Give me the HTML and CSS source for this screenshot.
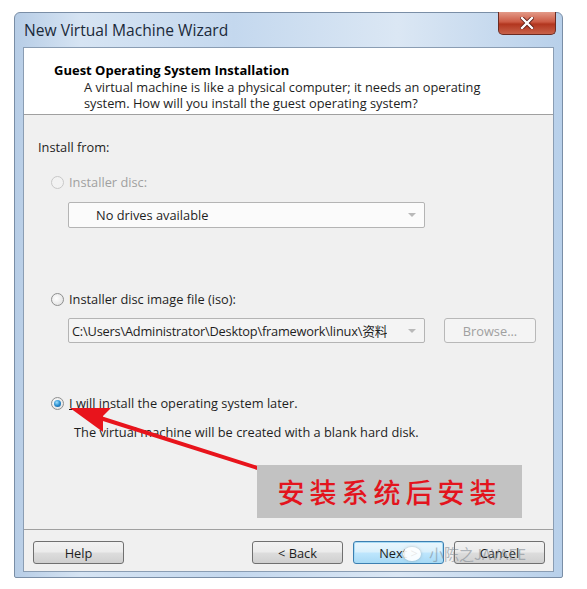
FILE: index.html
```html
<!DOCTYPE html>
<html lang="en">
<head>
    <meta charset="UTF-8">
    <title>New Virtual Machine Wizard</title>
    <link rel="stylesheet" href="styles.css">
</head>
<body>
    <div class="window">
        <div class="titlebar">
            <span class="title">New Virtual Machine Wizard</span>
            <button class="close" type="button">
                <svg width="14" height="12" viewBox="0 0 14 12">
                    <path d="M2 1 L12 11 M12 1 L2 11" stroke="#5a1a14" stroke-width="4" stroke-linecap="square"/>
                    <path d="M2 1 L12 11 M12 1 L2 11" stroke="#fff" stroke-width="2.4" stroke-linecap="square"/>
                </svg>
            </button>
        </div>

        <div class="client">
            <div class="header">
                <h1>Guest Operating System Installation</h1>
                <p>A virtual machine is like a physical computer; it needs an operating<br>system. How will you install the guest operating system?</p>
            </div>

            <div class="content">
                <div class="group-label">Install from:</div>

                <div class="option disabled"><span class="radio"></span>Installer disc:</div>
                <div class="combo drives disabled">
                    <span>No drives available</span>
                    <span class="arrow"></span>
                </div>

                <div class="option opt-iso"><span class="radio"></span>Installer disc image file (iso):</div>
                <div class="iso-row">
                    <div class="combo path disabled">
                        <span>C:\Users\Administrator\Desktop\framework\linux\资料</span>
                        <span class="arrow"></span>
                    </div>
                    <button class="btn browse" type="button" disabled>Browse...</button>
                </div>

                <div class="option opt-later"><span class="radio checked"></span><span><u>I</u> will install the operating system later.</span></div>
                <p class="note">The virtual machine will be created with a blank hard disk.</p>
            </div>

            <div class="footer">
                <button class="btn" type="button">Help</button>
                <div class="nav">
                    <button class="btn" type="button">&lt; Back</button>
                    <button class="btn default" type="button">Next &gt;</button>
                    <button class="btn" type="button">Cancel</button>
                </div>
            </div>
        </div>

        <!-- annotation drawn over the screenshot -->
        <svg class="arrow-note" width="549" height="566" viewBox="0 0 549 566">
            <line x1="253" y1="459" x2="80" y2="404" stroke="#e8141c" stroke-width="4" stroke-linecap="round"/>
            <path d="M56 396 L97 396 L89 404 L89 420 Z" fill="#e8141c"/>
        </svg>
        <div class="callout">安装系统后安装</div>
        <div class="watermark"><span class="wm-icon"></span>小陈之JAVAEE</div>
    </div>
</body>
</html>
```

FILE: styles.css
```css
* {
    box-sizing: border-box;
    margin: 0;
    padding: 0;
}

body {
    background: #fff;
    font-family: "Open Sans", "Noto Sans CJK SC", sans-serif;
    font-size: 12.8px;
    color: #1e1e1e;
}

.window {
    position: relative;
    width: 549px;
    height: 566px;
    margin: 12px 0 0 14px;
    padding: 0 8px 5px 8px;
    border: 1px solid #7a8ea6;
    border-radius: 6px 6px 2px 2px;
    background: linear-gradient(90deg, #b7cde6 0%, #d6e4f3 12%, #c4d8ee 40%, #dbe7f4 70%, #b8d0ea 100%);
    display: flex;
    flex-direction: column;
}

.titlebar {
    height: 34px;
    display: flex;
    align-items: flex-start;
    justify-content: space-between;
}

.title {
    font-size: 15.6px;
    color: #1b2a3a;
    margin: 6px 0 0 1px;
}

.close {
    width: 58px;
    height: 23px;
    margin: -1px -2px 0 0;
    border: 1px solid #6b2b22;
    border-top: none;
    border-radius: 0 0 5px 5px;
    background: linear-gradient(180deg, #e39a88 0%, #cc5a44 45%, #b2361f 55%, #c8624a 100%);
    display: flex;
    align-items: center;
    justify-content: center;
}

.client {
    flex: 1;
    display: flex;
    flex-direction: column;
    background: #f0f0f0;
    border: 1px solid #8a9db3;
}

.header {
    height: 67px;
    background: #fff;
    border-bottom: 1px solid #a0a0a0;
    padding: 15px 0 0 30px;
}

.header h1 {
    font-size: 13px;
    font-weight: 700;
    color: #000;
    line-height: 15px;
}

.header p {
    margin: 1px 0 0 30px;
    line-height: 16px;
    color: #1e1e1e;
}

.content {
    height: 414px;
    padding-left: 14px;
}

.group-label {
    margin-top: 24px;
    height: 16px;
    line-height: 16px;
}

.option {
    display: flex;
    align-items: center;
    gap: 5px;
    height: 16px;
    line-height: 16px;
    margin: 19px 0 0 13px;
}

.option.disabled {
    color: #a0a0a0;
}

.opt-iso {
    margin-top: 63px;
}

.opt-later {
    margin-top: 52px;
}

.radio {
    width: 13px;
    height: 13px;
    border-radius: 50%;
    border: 1px solid #8e8f8f;
    background: radial-gradient(circle at 40% 40%, #fff 0%, #e6e6e6 70%, #cfcfcf 100%);
    display: flex;
    align-items: center;
    justify-content: center;
}

.disabled .radio {
    border-color: #c8c8c8;
    background: #f2f2f2;
}

.radio.checked::after {
    content: "";
    width: 7px;
    height: 7px;
    border-radius: 50%;
    background: radial-gradient(circle at 40% 35%, #9fe0ff 0%, #2a8fd0 50%, #0b4f91 100%);
}

.combo {
    height: 26px;
    border: 1px solid #b4b4b4;
    border-radius: 2px;
    background: #fbfbfb;
    display: flex;
    align-items: center;
    justify-content: space-between;
    padding: 0 8px 0 27px;
}

.combo.disabled {
    color: #1e1e1e;
}

.drives {
    width: 357px;
    margin: 12px 0 0 30px;
}

.arrow {
    flex: none;
    width: 0;
    height: 0;
    border-left: 4px solid transparent;
    border-right: 4px solid transparent;
    border-top: 4px solid #b9b9b9;
}

.iso-row {
    display: flex;
    gap: 19px;
    margin: 11px 0 0 30px;
}

.path {
    width: 357px;
    height: 25px;
    padding-left: 3px;
    gap: 6px;
    color: #7a7a7a;
    background: #f4f4f4;
}

.path span:first-child {
    white-space: nowrap;
    overflow: hidden;
    letter-spacing: -0.2px;
}

.note {
    margin: 13px 0 0 36px;
    height: 16px;
    line-height: 16px;
}

.btn {
    width: 91px;
    height: 23px;
    font-family: inherit;
    font-size: 12.8px;
    color: #1e1e1e;
    border: 1px solid #707070;
    border-radius: 3px;
    background: linear-gradient(180deg, #f2f2f2 0%, #ebebeb 48%, #dddddd 52%, #cfcfcf 100%);
}

.btn:disabled {
    color: #a0a0a0;
    border-color: #b8b8b8;
    background: #f4f4f4;
}

.browse {
    width: 92px;
    height: 25px;
}

.btn.default {
    border-color: #3c7fb1;
    box-shadow: inset 0 0 0 1px #a7dbf5;
    background: linear-gradient(180deg, #eaf6fd 0%, #d9f0fc 48%, #bee6fd 52%, #a7d9f5 100%);
}

.footer {
    flex: 1;
    border-top: 1px solid #a0a0a0;
    display: flex;
    justify-content: space-between;
    align-items: flex-start;
    padding: 11px 8px 0 9px;
}

.nav {
    display: flex;
    gap: 10px;
}

.arrow-note {
    position: absolute;
    left: -1px;
    top: -1px;
}

.callout {
    position: absolute;
    left: 242px;
    top: 452px;
    width: 265px;
    height: 53px;
    background: #c2c2c2;
    color: #e3141d;
    font-family: "Noto Sans CJK SC", sans-serif;
    font-size: 27px;
    font-weight: 500;
    letter-spacing: 5px;
    display: flex;
    align-items: center;
    justify-content: center;
}

.watermark {
    position: absolute;
    left: 388px;
    top: 530px;
    display: flex;
    align-items: center;
    gap: 8px;
    font-family: "Noto Sans CJK SC", sans-serif;
    font-size: 15px;
    color: rgba(120, 130, 140, 0.55);
}

.wm-icon {
    width: 18px;
    height: 14px;
    border-radius: 50%;
    background: rgba(255, 255, 255, 0.9);
    box-shadow: 0 0 3px rgba(140, 140, 140, 0.6);
}
```
